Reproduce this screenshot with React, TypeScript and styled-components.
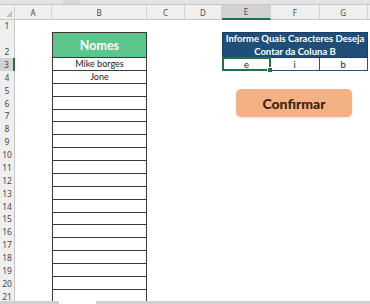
import React from 'react';
import styled, { createGlobalStyle } from 'styled-components';

const GlobalStyle = createGlobalStyle`
  html, body {
    margin: 0;
    padding: 0;
    background: #ffffff;
  }
`;

const COLS = [
  { key: 'A', w: 37 },
  { key: 'B', w: 95 },
  { key: 'C', w: 38 },
  { key: 'D', w: 37 },
  { key: 'E', w: 49 },
  { key: 'F', w: 48.5 },
  { key: 'G', w: 48.5 },
];

const ROW_H = 12.89;
const NAMES = ['Mike borges', 'Jone'];

const Sheet = styled.div`
  position: relative;
  width: 370px;
  height: 304px;
  overflow: hidden;
  background: #ffffff;
  display: flex;
  flex-direction: column;
  font-family: Lato, 'Liberation Sans', sans-serif;
`;

const FormulaEdge = styled.div`
  height: 5px;
  flex: none;
  display: flex;
  background: #d6d6d6;
  border-bottom: 1px solid #c8c8c8;
  box-sizing: border-box;
`;

const EdgePart = styled.div<{ $w: number; $light?: boolean }>`
  width: ${(p) => p.$w}px;
  flex: none;
  background: ${(p) => (p.$light ? '#e4e4e4' : 'transparent')};
`;

const Row = styled.div<{ $h: number }>`
  display: flex;
  flex: none;
  height: ${(p) => p.$h}px;
`;

const Corner = styled.div`
  width: 15px;
  flex: none;
  background: #efefef;
  border-right: 1px solid #d4d4d4;
  border-bottom: 1px solid #c6c6c6;
  box-sizing: border-box;
  position: relative;
  &::after {
    content: '';
    position: absolute;
    right: 2px;
    bottom: 2px;
    border-left: 6px solid transparent;
    border-bottom: 6px solid #c2c2c2;
  }
`;

const ColHead = styled.div<{ $w: number; $active?: boolean }>`
  width: ${(p) => p.$w}px;
  flex: none;
  box-sizing: border-box;
  background: ${(p) => (p.$active ? '#d2d2d2' : '#efefef')};
  border-right: 1px solid #d4d4d4;
  border-bottom: ${(p) => (p.$active ? '2px solid #217346' : '1px solid #c6c6c6')};
  color: #4a4a4a;
  font-family: 'Noto Sans', sans-serif;
  font-size: 8px;
  display: flex;
  align-items: center;
  justify-content: center;
`;

const HeadFill = styled.div`
  flex: 1;
  background: #efefef;
  border-bottom: 1px solid #c6c6c6;
`;

const RowHead = styled.div<{ $active?: boolean }>`
  width: 15px;
  flex: none;
  box-sizing: border-box;
  background: ${(p) => (p.$active ? '#d2d2d2' : '#efefef')};
  border-right: ${(p) => (p.$active ? '2px solid #217346' : '1px solid #c6c6c6')};
  color: #4a4a4a;
  font-family: 'Noto Sans', sans-serif;
  font-size: 8.5px;
  line-height: 10px;
  display: flex;
  align-items: flex-end;
  justify-content: center;
  padding-bottom: 1px;
`;

const Cell = styled.div<{ $w: number }>`
  width: ${(p) => p.$w}px;
  flex: none;
  box-sizing: border-box;
  position: relative;
  display: flex;
  align-items: center;
  justify-content: center;
  font-size: 9px;
  color: #222;
`;

const NameHead = styled(Cell)`
  background: #5bc58b;
  border: 1px solid #3a3a3a;
  color: #ffffff;
  font-weight: 700;
  font-size: 12.5px;
`;

const NameCell = styled(Cell)`
  border-left: 1px solid #3a3a3a;
  border-right: 1px solid #3a3a3a;
  border-bottom: 1px solid #3a3a3a;
`;

const PromptHead = styled(Cell)`
  background: #1f4e79;
  border: 1px solid #1b3f62;
  color: #ffffff;
  font-weight: 700;
  font-size: 9.5px;
  line-height: 13px;
  text-align: center;
`;

const CharCell = styled(Cell)<{ $first?: boolean }>`
  border-left: ${(p) => (p.$first ? '1px solid #2f4f6f' : 'none')};
  border-right: 1px solid #2f4f6f;
  border-bottom: 1px solid #2f4f6f;
  padding-top: 1px;
  font-size: 9.5px;
`;

const Selection = styled.div`
  position: absolute;
  left: -1px;
  top: -1px;
  right: -1px;
  bottom: -1px;
  border: 2px solid #217346;
  pointer-events: none;
  &::after {
    content: '';
    position: absolute;
    right: -4px;
    bottom: -4px;
    width: 4px;
    height: 4px;
    background: #217346;
    border: 1px solid #ffffff;
  }
`;

const TabBar = styled.div`
  position: absolute;
  left: 0;
  right: 0;
  bottom: 0;
  height: 3px;
  display: flex;
  background: #d0d0d0;
`;

const Tab = styled.div<{ $w: number; $active?: boolean }>`
  width: ${(p) => p.$w}px;
  flex: none;
  background: ${(p) => (p.$active ? '#ffffff' : 'transparent')};
`;

const ConfirmButton = styled.button`
  position: absolute;
  left: 236px;
  top: 89px;
  width: 116px;
  height: 28px;
  border: none;
  border-radius: 5px;
  background: #f4b183;
  color: #3b2416;
  font-family: Lato, 'Liberation Sans', sans-serif;
  font-weight: 900;
  font-size: 14px;
  box-shadow: 0 1px 2px rgba(0, 0, 0, 0.12);
  padding: 0;
`;

const w = (k: string) => COLS.find((c) => c.key === k)!.w;

function Blank({ col }: { col: string }) {
  return <Cell $w={w(col)} />;
}

export default function App() {
  const bodyRows = Array.from({ length: 19 }, (_, i) => i + 3);

  return (
    <Sheet>
      <GlobalStyle />
      <FormulaEdge>
        <EdgePart $w={63} $light />
        <EdgePart $w={17} />
        <EdgePart $w={290} $light />
      </FormulaEdge>

      <Row $h={15}>
        <Corner />
        {COLS.map((c) => (
          <ColHead key={c.key} $w={c.w} $active={c.key === 'E'}>
            {c.key}
          </ColHead>
        ))}
        <HeadFill />
      </Row>

      <Row $h={12}>
        <RowHead>1</RowHead>
      </Row>

      <Row $h={26}>
        <RowHead>2</RowHead>
        <Blank col="A" />
        <NameHead $w={w('B')}>Nomes</NameHead>
        <Blank col="C" />
        <Blank col="D" />
        <PromptHead $w={w('E') + w('F') + w('G')}>
          Informe Quais Caracteres Deseja
          <br />
          Contar da Coluna B
        </PromptHead>
      </Row>

      {bodyRows.map((n) => (
        <Row key={n} $h={ROW_H}>
          <RowHead $active={n === 3}>{n}</RowHead>
          <Blank col="A" />
          <NameCell $w={w('B')}>{NAMES[n - 3] ?? ''}</NameCell>
          {n === 3 && (
            <>
              <Blank col="C" />
              <Blank col="D" />
              <CharCell $w={w('E')} $first>
                e
                <Selection />
              </CharCell>
              <CharCell $w={w('F')}>i</CharCell>
              <CharCell $w={w('G')}>b</CharCell>
            </>
          )}
        </Row>
      ))}

      <ConfirmButton>Confirmar</ConfirmButton>

      <TabBar>
        <Tab $w={59} />
        <Tab $w={37} $active />
      </TabBar>
    </Sheet>
  );
}
